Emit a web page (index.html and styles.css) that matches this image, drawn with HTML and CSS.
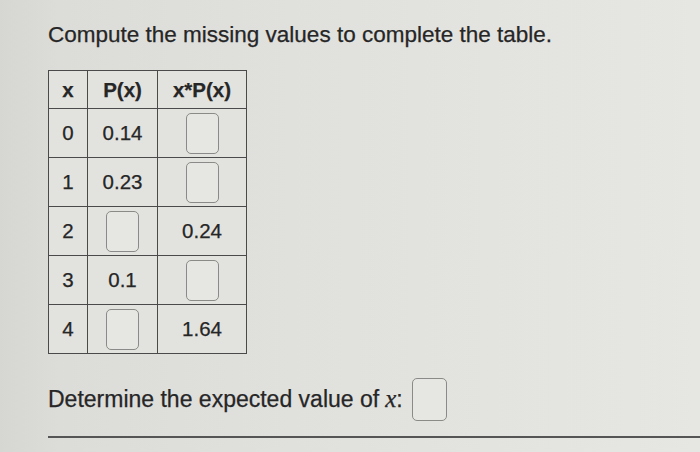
FILE: index.html
```html
<!DOCTYPE html>
<html>
<head>
<meta charset="utf-8">
<link rel="stylesheet" href="styles.css">
</head>
<body>
<div class="page">
  <h1 class="title">Compute the missing values to complete the table.</h1>
  <table class="grid">
    <colgroup><col class="c1"><col class="c2"><col class="c3"></colgroup>
    <tr class="head"><th>x</th><th>P(x)</th><th>x*P(x)</th></tr>
    <tr><td>0</td><td>0.14</td><td><span class="box"></span></td></tr>
    <tr><td>1</td><td>0.23</td><td><span class="box"></span></td></tr>
    <tr><td>2</td><td><span class="box"></span></td><td>0.24</td></tr>
    <tr><td>3</td><td>0.1</td><td><span class="box"></span></td></tr>
    <tr><td>4</td><td><span class="box"></span></td><td>1.64</td></tr>
  </table>
  <p class="expect">Determine the expected value of <i class="var">x</i>: <span class="box"></span></p>
  <div class="rule"></div>
</div>
</body>
</html>
```
FILE: styles.css
```css
html, body {
  margin: 0;
  padding: 0;
  width: 700px;
  height: 452px;
  overflow: hidden;
}
body {
  background: linear-gradient(90deg, #d6d6d3 0px, #dcdcd9 60px, #e1e1de 350px, #e6e6e3 700px);
  font-family: "Liberation Sans", Arial, sans-serif;
  color: #262626;
  -webkit-text-stroke: 0.25px #262626;
}
.page {
  padding: 20px 0 0 48px;
}
.title {
  margin: 0;
  font-size: 22.5px;
  font-weight: normal;
  line-height: 30px;
}
.grid {
  margin-top: 20px;
  border-collapse: collapse;
  background: #e2e2df;
}
.c1 { width: 39px; }
.c2 { width: 70px; }
.c3 { width: 89px; }
.grid th, .grid td {
  border: 1.5px solid #4a4a4a;
  text-align: center;
  padding: 0;
  font-size: 20.5px;
}
.grid th {
  height: 37px;
  font-weight: bold;
}
.grid td {
  height: 48px;
}
.box {
  display: inline-block;
  width: 33px;
  height: 41px;
  border: 1.5px solid #8a8a88;
  border-radius: 5px;
  background: #e6e6e3;
  vertical-align: middle;
  box-sizing: border-box;
  -webkit-text-stroke: 0;
}
.expect {
  margin: 22px 0 0 0;
  font-size: 23px;
  line-height: 46px;
  display: flex;
  align-items: center;
}
.var {
  font-family: "Liberation Serif", serif;
  font-size: 25px;
  margin-left: 6px;
}
.expect .box {
  margin-left: 9px;
  width: 35px;
  height: 43px;
}
.rule {
  margin-top: 14px;
  height: 2px;
  background: #555;
}
```
